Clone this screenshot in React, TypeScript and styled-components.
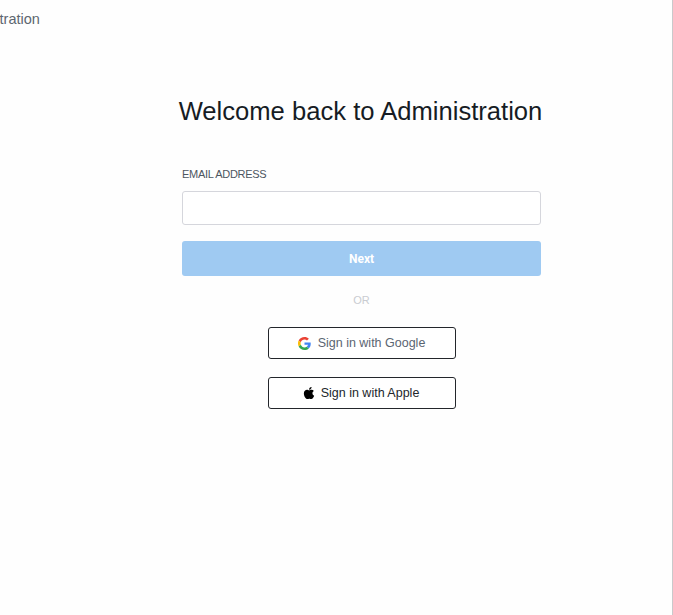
import React from "react";
import styled, { createGlobalStyle } from "styled-components";
import { FaApple } from "react-icons/fa";

const GlobalStyle = createGlobalStyle`
  html, body {
    margin: 0;
    padding: 0;
    background: #fff;
    font-family: "Liberation Sans", Arial, sans-serif;
  }
`;

const Page = styled.div`
  box-sizing: border-box;
  width: 673px;
  height: 615px;
  overflow: hidden;
  border-right: 1px solid #c9c9cb;
  background: #fefefe;
`;

const Header = styled.div`
  height: 37px;
  margin-left: -52px;
  padding-top: 11px;
  box-sizing: border-box;
  font-size: 14.5px;
  line-height: 16px;
  color: #5d6670;
  white-space: nowrap;
`;

const Main = styled.main`
  display: flex;
  flex-direction: column;
  align-items: center;
  width: 359px;
  margin-left: 182px;
  padding-top: 58px;
`;

const Title = styled.h1`
  margin: 0 -9px 40px -11px;
  font-size: 25.6px;
  line-height: 32px;
  font-weight: 400;
  color: #161c24;
  white-space: nowrap;
`;

const Label = styled.label`
  align-self: flex-start;
  font-size: 11px;
  line-height: 14px;
  letter-spacing: -0.3px;
  color: #4d5661;
  margin-bottom: 10px;
`;

const Input = styled.input`
  box-sizing: border-box;
  width: 100%;
  height: 34px;
  border: 1px solid #d5d6dc;
  border-radius: 3px;
  background: #fff;
  outline: none;
`;

const NextButton = styled.button`
  width: 100%;
  height: 35px;
  margin-top: 16px;
  border: none;
  border-radius: 3px;
  background: #9fcaf2;
  color: #fff;
  font-family: Roboto, sans-serif;
  font-size: 12px;
  font-weight: 700;
`;

const Or = styled.div`
  margin: 18px 0 20px;
  font-size: 11px;
  line-height: 13px;
  color: #c9ccd1;
`;

const SocialList = styled.div`
  display: flex;
  flex-direction: column;
  align-items: center;
  gap: 18px;
`;

const SocialButton = styled.button<{ $dark?: boolean }>`
  box-sizing: border-box;
  display: flex;
  align-items: center;
  justify-content: center;
  gap: ${(p) => (p.$dark ? "5px" : "7px")};
  width: 188px;
  height: 32px;
  padding: 0 ${(p) => (p.$dark ? "2px" : "0")} 0 0;
  border: 1px solid #23262b;
  border-radius: 3px;
  background: #fff;
  color: ${(p) => (p.$dark ? "#22262b" : "#5b6572")};
  font-family: "Liberation Sans", Arial, sans-serif;
  font-size: 12.5px;
`;

function GoogleIcon() {
  return (
    <svg width="13" height="13" viewBox="0 0 48 48">
      <path fill="#EA4335" d="M24 9.5c3.5 0 6.7 1.2 9.2 3.6l6.9-6.9C35.9 2.4 30.5 0 24 0 14.6 0 6.5 5.4 2.6 13.2l8 6.2C12.5 13.6 17.8 9.5 24 9.5z" />
      <path fill="#4285F4" d="M46.98 24.55c0-1.57-.15-3.09-.38-4.55H24v9.02h12.94c-.58 2.96-2.26 5.48-4.78 7.18l7.73 6c4.51-4.18 7.09-10.36 7.09-17.65z" />
      <path fill="#FBBC05" d="M10.53 28.59A14.5 14.5 0 0 1 9.5 24c0-1.6.28-3.14.76-4.59l-8-6.2A24 24 0 0 0 0 24c0 3.88.92 7.54 2.56 10.78l7.97-6.19z" />
      <path fill="#34A853" d="M24 48c6.48 0 11.93-2.13 15.89-5.81l-7.73-6c-2.15 1.45-4.92 2.3-8.16 2.3-6.26 0-11.57-4.22-13.47-9.91l-7.98 6.19C6.51 42.62 14.62 48 24 48z" />
    </svg>
  );
}

export default function App() {
  return (
    <Page>
      <GlobalStyle />
      <Header>Administration</Header>
      <Main>
        <Title>Welcome back to Administration</Title>
        <Label>EMAIL ADDRESS</Label>
        <Input type="email" />
        <NextButton>Next</NextButton>
        <Or>OR</Or>
        <SocialList>
          <SocialButton>
            <GoogleIcon />
            Sign in with Google
          </SocialButton>
          <SocialButton $dark>
            <FaApple size={14} color="#000" />
            Sign in with Apple
          </SocialButton>
        </SocialList>
      </Main>
    </Page>
  );
}
